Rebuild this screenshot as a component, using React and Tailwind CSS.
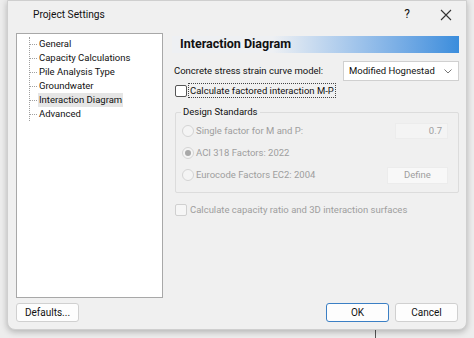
import React from 'react';

const font = { fontFamily: 'Roboto, "Noto Sans", sans-serif' };

const TreeItem = ({ label, selected }) => (
  <div className="flex items-center h-[14px]">
    <div className="w-[7px] border-t border-dotted border-[#a0a0a0]"></div>
    <span className={`ml-[1px] px-[1px] leading-[14px] ${selected ? 'bg-[#e5e5e5]' : ''}`}>{label}</span>
  </div>
);

const Radio = ({ checked }) => (
  <div className="w-[12px] h-[12px] rounded-full border border-[#d4d4d4] bg-[#f4f4f4] flex items-center justify-center">
    {checked && <div className="w-[6px] h-[6px] rounded-full bg-[#a8a8a8]"></div>}
  </div>
);

const App = () => {
  const items = ['General', 'Capacity Calculations', 'Pile Analysis Type', 'Groundwater', 'Interaction Diagram', 'Advanced'];

  return (
    <div className="w-[474px] h-[338px] bg-[#ededed] overflow-hidden relative text-[9.5px] text-[#111] whitespace-nowrap" style={font}>
      {/* dark line behind dialog */}
      <div className="absolute left-[375px] top-[325px] w-[1px] h-[13px] bg-[#555]"></div>

      <div className="relative ml-[7px] w-[460px] h-[330px] bg-[#f0f0f0] border border-[#cfcfcf] rounded-b-[8px] shadow-[0_2px_6px_rgba(0,0,0,0.25)] flex flex-col">
        {/* Title bar */}
        <div className="h-[32px] flex items-start pt-[6px] pl-[25px] pr-[13px]">
          <span className="text-[10.2px]">Project Settings</span>
          <span className="ml-auto mr-[30px] text-[12px] leading-[14px]">?</span>
          <svg width="12" height="12" viewBox="0 0 12 12" className="mr-[1px] mt-[2px]">
            <path d="M1 1 L11 11 M11 1 L1 11" stroke="#333" strokeWidth="1.1" />
          </svg>
        </div>

        <div className="flex pl-[8px]">
          {/* Tree */}
          <div className="w-[147px] h-[265px] bg-white border border-[#a8a8a8] pt-[3px] pl-[12px]">
            <div className="relative border-l border-dotted border-[#a0a0a0] w-fit">
              {items.map((it) => (
                <TreeItem key={it} label={it} selected={it === 'Interaction Diagram'} />
              ))}
            </div>
          </div>

          {/* Right panel */}
          <div className="ml-[9px] w-[287px] flex flex-col">
            <div className="h-[17px] mt-[3px] pl-[8px] flex items-center font-bold text-[12.5px] bg-gradient-to-r from-[#eef0f3] from-35% to-[#3a8ddc]">
              Interaction Diagram
            </div>

            <div className="flex items-center mt-[8px] pl-[2px]">
              <span>Concrete stress strain curve model:</span>
              <div className="ml-auto w-[116px] h-[20px] bg-white border border-[#d0d0d0] flex items-center pl-[5px] pr-[6px]">
                <span>Modified Hognestad</span>
                <svg width="8" height="5" viewBox="0 0 8 5" className="ml-auto">
                  <path d="M0.5 0.5 L4 4 L7.5 0.5" fill="none" stroke="#777" strokeWidth="1" />
                </svg>
              </div>
            </div>

            <div className="flex items-center mt-[2px] pl-[3px]">
              <div className="w-[12px] h-[12px] border border-[#555] rounded-[2px] bg-white"></div>
              <span className="ml-[1px] px-[1px] border border-dotted border-[#444] leading-[13px]">Calculate factored interaction M-P</span>
            </div>

            {/* Design standards group */}
            <div className="ml-[3px] mt-[14px] relative border border-[#dcdcdc] rounded-[2px] h-[81px] pt-[7px] pl-[6px] pr-[9px] text-[#9e9e9e]">
              <span className="absolute -top-[8px] left-[5px] px-[2px] bg-[#f0f0f0] text-[#111]">Design Standards</span>
              <div className="flex items-center h-[22px]">
                <Radio />
                <span className="ml-[2px]">Single factor for M and P:</span>
                <div className="ml-auto mr-[1px] w-[53px] h-[16px] bg-[#f4f4f4] border border-[#ececec] flex items-center justify-end pr-[5px]">0.7</div>
              </div>
              <div className="flex items-center h-[22px]">
                <Radio checked />
                <span className="ml-[2px]">ACI 318 Factors: 2022</span>
              </div>
              <div className="flex items-center h-[22px]">
                <Radio />
                <span className="ml-[2px]">Eurocode Factors EC2: 2004</span>
                <div className="ml-auto mr-[1px] w-[61px] h-[17px] bg-[#f8f8f8] border border-[#ececec] flex items-center justify-center">Define</div>
              </div>
            </div>

            <div className="flex items-center mt-[10px] pl-[3px] text-[#9e9e9e]">
              <div className="w-[12px] h-[12px] border border-[#d0d0d0] rounded-[2px] bg-[#f6f6f6]"></div>
              <span className="ml-[3px]">Calculate capacity ratio and 3D interaction surfaces</span>
            </div>
          </div>
        </div>

        {/* Buttons */}
        <div className="flex items-center mt-[5px] pl-[8px] pr-[8px]">
          <button className="w-[63px] h-[19px] bg-[#fdfdfd] border border-[#d0d0d0] rounded-[3px] text-[10px]">Defaults...</button>
          <button className="ml-auto w-[63px] h-[19px] bg-[#fdfdfd] border border-[#3b7fc4] rounded-[3px] text-[10px]">OK</button>
          <button className="ml-[6px] w-[63px] h-[19px] bg-[#fdfdfd] border border-[#d0d0d0] rounded-[3px] text-[10px]">Cancel</button>
        </div>
      </div>
    </div>
  );
};

export default App;
